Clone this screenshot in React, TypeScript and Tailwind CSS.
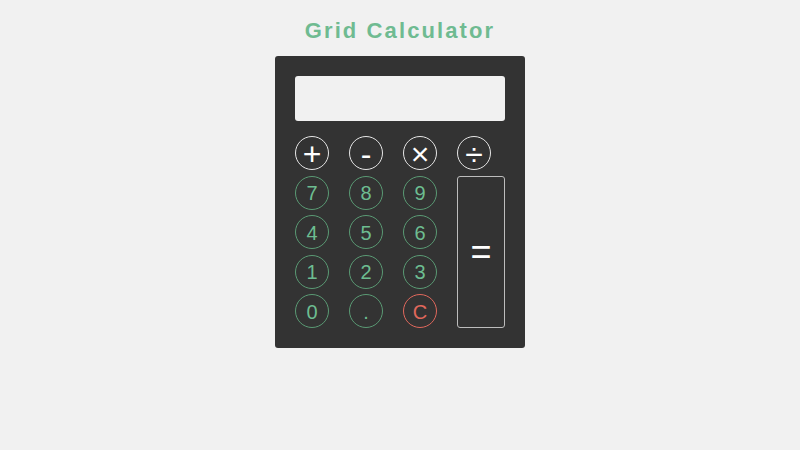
import React from "react";

const ops = ["+", "-", "×", "÷"];
const digits = ["7", "8", "9", "4", "5", "6", "1", "2", "3", "0", ".", "C"];

export default function App() {
  return (
    <div className="min-h-screen bg-[#f1f1f1] flex flex-col items-center pt-[18px]" style={{ fontFamily: '"Liberation Sans", Arial, sans-serif' }}>
      <h1 className="text-[22px] leading-[26px] font-bold tracking-[2.1px] text-[#6fbb91]">Grid Calculator</h1>
      <div className="mt-[12px] w-[250px] bg-[#333333] rounded-[3px] p-5">
        <div className="h-[45px] w-[210px] bg-[#f1f1f1] rounded-[3px]"></div>
        <div className="mt-[15px] grid grid-cols-[34px_34px_34px_48px] grid-rows-[34px_34px_34px_34px_34px] gap-x-5 gap-y-[5.5px]">
          {ops.map((o) => (
            <button key={o} className="w-[34px] h-[34px] rounded-full border border-[#e6e6e6] text-white text-[32px] leading-none flex items-center justify-center pt-[2px]">
              {o}
            </button>
          ))}
          {digits.slice(0, 3).map((d) => (
            <Digit key={d} d={d} />
          ))}
          <button className="row-span-4 row-start-2 col-start-4 w-[48px] rounded-[3px] border border-[#bdbdbd] text-white text-[36px] leading-none flex items-center justify-center">
            =
          </button>
          {digits.slice(3).map((d) => (
            <Digit key={d} d={d} />
          ))}
        </div>
      </div>
    </div>
  );
}

function Digit({ d }: { d: string }) {
  const red = d === "C";
  return (
    <button
      className={
        red
          ? "w-[34px] h-[34px] rounded-full border border-[#e0685c] text-[#e0685c] text-[20px] leading-none flex items-center justify-center pt-[1px]"
          : "w-[34px] h-[34px] rounded-full border border-[#5a9a74] text-[#6dbd91] text-[20px] leading-none flex items-center justify-center pt-[1px]"
      }
    >
      {d}
    </button>
  );
}
